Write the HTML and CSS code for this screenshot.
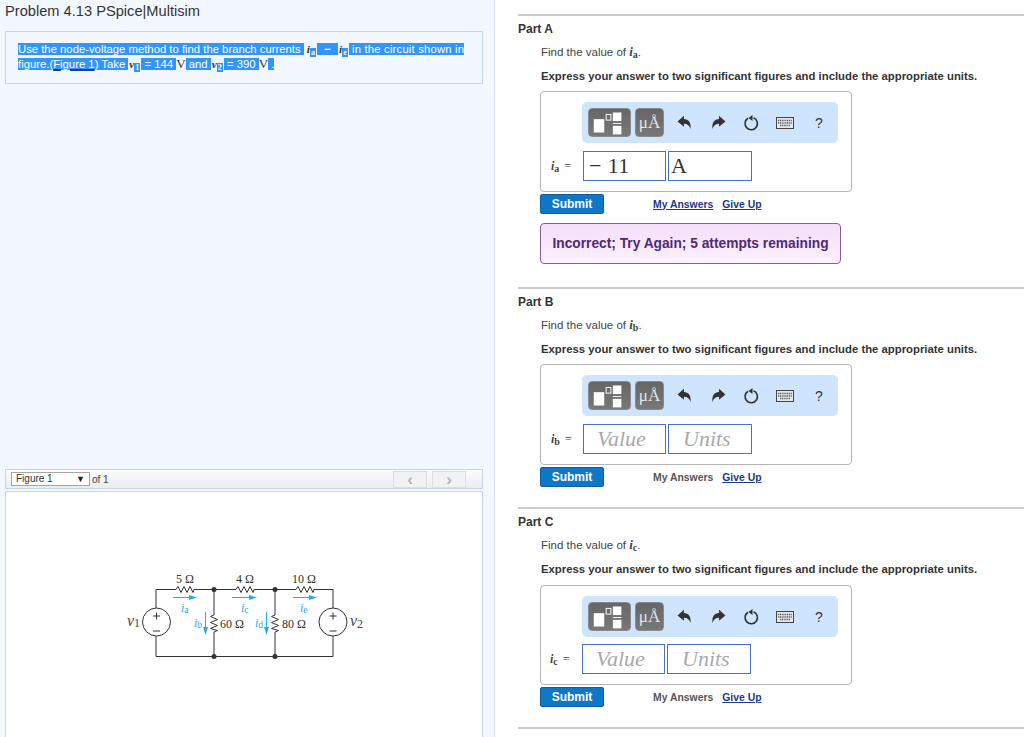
FILE: index.html
```html
<!DOCTYPE html>
<html lang="en">
<head>
<meta charset="utf-8">
<title>Problem 4.13 PSpice|Multisim</title>
<link rel="stylesheet" href="styles.css">
</head>
<body>
<svg class="defs" width="0" height="0" aria-hidden="true">
  <symbol id="tpl" viewBox="0 0 43 29">
    <rect x="5" y="11" width="11" height="14" fill="#fff"/>
    <rect x="18" y="6" width="5" height="6" fill="none" stroke="#fff" stroke-width="1"/>
    <rect x="25" y="4" width="9" height="9" fill="#fff"/>
    <rect x="25" y="15" width="9" height="1" fill="#fff"/>
    <rect x="25" y="18" width="9" height="9" fill="#fff"/>
  </symbol>
  <symbol id="undo" viewBox="0 0 14 14">
    <path d="M0.500 6 L6.500 0.800 V3.800 C10.800 3.800 13.300 7 12.600 13 C11.500 9.500 9.500 8.200 6.500 8.200 V11 Z" fill="#333"/>
  </symbol>
  <symbol id="redo" viewBox="0 0 14 14">
    <path d="M13.500 6 L7.500 0.800 V3.800 C3.200 3.800 0.700 7 1.400 13 C2.500 9.500 4.500 8.200 7.500 8.200 V11 Z" fill="#333"/>
  </symbol>
  <symbol id="reset" viewBox="0 0 16 16">
    <path d="M5 3.300 A6.200 6.200 0 1 0 10.500 2.800" fill="none" stroke="#333" stroke-width="1.600"/>
    <path d="M9.500 0 L9.500 6 L5.500 3 Z" fill="#333"/>
  </symbol>
  <symbol id="kbd" viewBox="0 0 18 12">
    <rect x="0.500" y="0.500" width="17" height="11" fill="#e3e9ef" stroke="#444"/>
    <path d="M2 3.500 H16 M2 6 H16 M4 8.500 H14" stroke="#666" stroke-width="1.400" stroke-dasharray="1.200 .6"/>
  </symbol>
</svg>

<main class="page">
  <section class="left">
    <h1 class="title">Problem 4.13 PSpice|Multisim</h1>
    <div class="intro">
      <p class="intro-text"><span class="sel">Use the node-voltage method to find the branch currents </span><span class="sel-var sel-var-first"><i>i</i><sub>a</sub></span><span class="sel"> &nbsp;</span><span class="sel minus">&minus;</span><span class="sel"> &nbsp;</span><span class="sel-var"><i>i</i><sub>e</sub></span><span class="sel sel-wide"> in the circuit shown in </span><br><span class="sel">figure.(<u>Figure 1</u>) Take </span><span class="sel-var"><i>v</i><sub>1</sub></span><span class="sel"> = 144 </span><span class="sel-unit">V</span><span class="sel"> and </span><span class="sel-var"><i>v</i><sub>2</sub></span><span class="sel"> = 390 </span><span class="sel-unit">V</span><span class="sel"> .</span></p>
    </div>
    <div class="spacer"></div>
    <div class="figure-bar">
      <div class="select"><span>Figure 1</span><span class="caret">&#9660;</span></div>
      <span class="of">of 1</span>
      <div class="pager">
        <span class="page-btn">&lsaquo;</span>
        <span class="page-btn">&rsaquo;</span>
      </div>
    </div>
    <div class="figure">
      <svg class="circuit" width="280" height="110" viewBox="0 0 280 110">
        <g fill="none" stroke="#333" stroke-width="1">
          <path d="M56 48 V29.500 H76 M94 29.500 H136 M154 29.500 H196 M214 29.500 H233 V48"/>
          <path d="M56 76 V96.500 H233 V76"/>
          <path d="M114 29.500 V55 M114 72 V96.500 M175 29.500 V55 M175 72 V96.500"/>
          <path d="M76 29.500 l2 -3 l3 6 l3 -6 l3 6 l3 -6 l3 6 l1 -3"/>
          <path d="M136 29.500 l2 -3 l3 6 l3 -6 l3 6 l3 -6 l3 6 l1 -3"/>
          <path d="M196 29.500 l2 -3 l3 6 l3 -6 l3 6 l3 -6 l3 6 l1 -3"/>
          <path d="M114 55 l-3.500 1.500 l7 3 l-7 3 l7 3 l-7 3 l7 2 l-3.500 1.500"/>
          <path d="M175 55 l-3.500 1.500 l7 3 l-7 3 l7 3 l-7 3 l7 2 l-3.500 1.500"/>
          <circle cx="56.500" cy="62" r="14" fill="#fff"/>
          <circle cx="233" cy="62" r="14" fill="#fff"/>
          <path d="M53 56 H60 M56.500 52.500 V59.500 M53 71 H60 M229.500 56 H236.500 M233 52.500 V59.500 M229.500 71 H236.500"/>
        </g>
        <g fill="#333">
          <circle cx="114" cy="29.500" r="2.500"/>
          <circle cx="175" cy="29.500" r="2.500"/>
          <circle cx="114" cy="96.500" r="2.500"/>
          <circle cx="175" cy="96.500" r="2.500"/>
        </g>
        <g fill="none" stroke="#29abe2" stroke-width="1">
          <path d="M73 37.500 H93 M132 37.500 H153 M193 37.500 H213 M105.500 52 V70 M166.500 52 V70"/>
        </g>
        <g fill="#29abe2">
          <path d="M89 35 L97 37.500 L89 40 Z M149 35 L157 37.500 L149 40 Z M209 35 L217 37.500 L209 40 Z M103 67 L105.500 75 L108 67 Z M164 67 L166.500 75 L169 67 Z"/>
        </g>
        <g class="ct-label">
          <text x="85" y="23" text-anchor="middle">5 Ω</text>
          <text x="145" y="23" text-anchor="middle">4 Ω</text>
          <text x="204" y="23" text-anchor="middle">10 Ω</text>
          <text x="120" y="68">60 Ω</text>
          <text x="182" y="68">80 Ω</text>
        </g>
        <g class="ct-cur">
          <text x="81" y="52"><tspan class="it">i</tspan><tspan class="sm" dy="1">a</tspan></text>
          <text x="141" y="52"><tspan class="it">i</tspan><tspan class="sm" dy="1">c</tspan></text>
          <text x="200" y="52"><tspan class="it">i</tspan><tspan class="sm" dy="1">e</tspan></text>
          <text x="94" y="67"><tspan class="it">i</tspan><tspan class="sm" dy="1">b</tspan></text>
          <text x="155" y="67"><tspan class="it">i</tspan><tspan class="sm" dy="1">d</tspan></text>
        </g>
        <text class="ct-src" x="27" y="66"><tspan class="it">v</tspan><tspan class="sm" dy="1">1</tspan></text>
        <text class="ct-src" x="250" y="66"><tspan class="it">v</tspan><tspan class="sm" dy="2">2</tspan></text>
      </svg>
    </div>
  </section>

  <section class="right">
    <article class="part part-a">
      <h2 class="part-title">Part A</h2>
      <p class="find">Find the value of <span class="var"><i>i</i><sub>a</sub></span>.</p>
      <p class="express">Express your answer to two significant figures and include the appropriate units.</p>
      <div class="answer">
        <div class="toolbar">
          <span class="tool tool-wide"><svg width="43" height="29"><use href="#tpl"/></svg></span>
          <span class="tool tool-unit">μÅ</span>
          <svg class="ico ico-undo" width="15" height="15"><use href="#undo"/></svg>
          <svg class="ico ico-redo" width="15" height="15"><use href="#redo"/></svg>
          <svg class="ico ico-reset" width="16" height="16"><use href="#reset"/></svg>
          <svg class="ico ico-kbd" width="18" height="12"><use href="#kbd"/></svg>
          <span class="help">?</span>
        </div>
        <div class="row">
          <span class="lhs"><i>i</i><sub>a</sub> =</span>
          <span class="field field-filled">&minus; 11</span>
          <span class="field field-filled field-unit">A</span>
        </div>
      </div>
      <div class="actions">
        <span class="submit">Submit</span>
        <a class="link link-first">My Answers</a>
        <a class="link">Give Up</a>
      </div>
      <div class="feedback">Incorrect; Try Again; 5 attempts remaining</div>
    </article>

    <article class="part part-b">
      <h2 class="part-title">Part B</h2>
      <p class="find">Find the value of <span class="var"><i>i</i><sub>b</sub></span>.</p>
      <p class="express">Express your answer to two significant figures and include the appropriate units.</p>
      <div class="answer">
        <div class="toolbar">
          <span class="tool tool-wide"><svg width="43" height="29"><use href="#tpl"/></svg></span>
          <span class="tool tool-unit">μÅ</span>
          <svg class="ico ico-undo" width="15" height="15"><use href="#undo"/></svg>
          <svg class="ico ico-redo" width="15" height="15"><use href="#redo"/></svg>
          <svg class="ico ico-reset" width="16" height="16"><use href="#reset"/></svg>
          <svg class="ico ico-kbd" width="18" height="12"><use href="#kbd"/></svg>
          <span class="help">?</span>
        </div>
        <div class="row">
          <span class="lhs"><i>i</i><sub>b</sub> =</span>
          <span class="field">Value</span>
          <span class="field field-unit">Units</span>
        </div>
      </div>
      <div class="actions">
        <span class="submit">Submit</span>
        <span class="link link-first link-off">My Answers</span>
        <a class="link">Give Up</a>
      </div>
    </article>

    <article class="part part-c">
      <h2 class="part-title">Part C</h2>
      <p class="find">Find the value of <span class="var"><i>i</i><sub>c</sub></span>.</p>
      <p class="express">Express your answer to two significant figures and include the appropriate units.</p>
      <div class="answer">
        <div class="toolbar">
          <span class="tool tool-wide"><svg width="43" height="29"><use href="#tpl"/></svg></span>
          <span class="tool tool-unit">μÅ</span>
          <svg class="ico ico-undo" width="15" height="15"><use href="#undo"/></svg>
          <svg class="ico ico-redo" width="15" height="15"><use href="#redo"/></svg>
          <svg class="ico ico-reset" width="16" height="16"><use href="#reset"/></svg>
          <svg class="ico ico-kbd" width="18" height="12"><use href="#kbd"/></svg>
          <span class="help">?</span>
        </div>
        <div class="row">
          <span class="lhs"><i>i</i><sub>c</sub> =</span>
          <span class="field">Value</span>
          <span class="field field-unit">Units</span>
        </div>
      </div>
      <div class="actions">
        <span class="submit">Submit</span>
        <span class="link link-first link-off">My Answers</span>
        <a class="link">Give Up</a>
      </div>
    </article>
    <div class="end-rule"></div>
  </section>
</main>
</body>
</html>
```

FILE: styles.css
```css
* { box-sizing: border-box; }
html, body { margin: 0; height: 737px; overflow: hidden; background: #fff; }
body { font-family: "Liberation Sans", Arial, sans-serif; color: #333; }
.defs { position: absolute; }
.page { display: flex; height: 737px; }

.left {
  width: 495px;
  flex: none;
  display: flex;
  flex-direction: column;
  background: #f3f8fe;
  border-right: 1px solid #d5deea;
  padding: 0 11px 0 5px;
}
.title { margin: 2px 0 0; font-size: 14.650px; line-height: 18px; font-weight: 400; color: #333; }
.intro {
  margin-top: 11px;
  height: 53px;
  background: #f3f8fe;
  border: 1px solid #c5d6e6;
  padding: 10px 12px 0;
}
.intro-text { margin: 0; font-size: 11.300px; line-height: 14.500px; color: #fff; white-space: nowrap; }
.sel { background: #3295fb; }
.sel-wide { letter-spacing: .18px; }
.sel u { text-decoration-color: #1a3f90; text-decoration-thickness: 2px; }
.minus { font-weight: 700; padding: 0 1px; }
.sel-var { background: #eef3fb; color: #333; font-family: "Liberation Serif", serif; font-weight: 700; padding: 0 1px; }
.sel-var-first { margin-left: 2px; }
.sel-var sub { font-size: 8px; line-height: 0; vertical-align: -2px; background: #3295fb; color: #fff; padding: 0 1px; }
.sel-unit { background: #f3f8fe; color: #333; font-family: "Liberation Serif", serif; font-size: 13px; }
.spacer { flex: 1; }

.figure-bar {
  height: 20px;
  display: flex;
  align-items: center;
  gap: 2px;
  background: linear-gradient(#fbfbfb, #ebedef);
  border: 1px solid #c5d6e6;
  padding: 0 16px 0 5px;
  font-size: 10px;
}
.select {
  width: 79px;
  height: 14px;
  display: flex;
  justify-content: space-between;
  align-items: center;
  background: #fff;
  border: 1px solid #a5a5a5;
  padding: 0 4px;
  font-size: 10px;
  line-height: 12px;
  color: #333;
}
.caret { font-size: 9px; line-height: 9px; color: #222; }
.of { color: #444; }
.pager { margin-left: auto; display: flex; gap: 5px; align-self: flex-end; }
.page-btn {
  width: 34px;
  height: 17px;
  display: flex;
  align-items: center;
  justify-content: center;
  background: #f1f2f3;
  border: 1px solid #dcdfe2;
  color: #b0b5ba;
  font-size: 17px;
  font-weight: 700;
  line-height: 14px;
}
.figure {
  margin-top: 2px;
  height: 246px;
  background: #fff;
  border: 1px solid #c5d6e6;
  border-bottom: 0;
  padding: 68px 0 0 94px;
}
.circuit { display: block; }
.circuit text { font-family: "Liberation Serif", serif; }
.ct-label text { font-size: 12px; fill: #333; }
.ct-cur text { font-size: 12px; fill: #29abe2; }
.ct-src { font-size: 16px; fill: #444; }
.it { font-style: italic; }
.sm { font-size: 9.500px; }
.ct-src .sm { font-size: 12px; }

.right {
  flex: 1;
  padding: 14px 0 0 23px;
  min-width: 0;
}
.part { border-top: 2px solid #ccc; padding-top: 6px; }
.part-a { height: 273px; }
.part-b { height: 220px; }
.part-c { height: 220px; }
.end-rule { border-top: 2px solid #ccc; }
.part-title { margin: 0; font-size: 12px; line-height: 14px; font-weight: 700; color: #333; }
.find, .express { margin: 0 0 0 23px; font-size: 11.500px; line-height: 14px; }
.find { margin-top: 9px; color: #444; }
.var, .lhs { font-family: "Liberation Serif", serif; }
.var { font-size: 13px; }
.var i, .lhs i { font-weight: 700; }
.var sub, .lhs sub { font-size: 10px; line-height: 0; vertical-align: -2px; font-weight: 700; }
.express { margin-top: 10px; font-weight: 700; font-size: 11.330px; color: #333; }
.answer {
  margin: 8px 0 0 22px;
  width: 312px;
  height: 101px;
  border: 1px solid #b5b5b5;
  border-radius: 4px;
  padding: 10px 0 0 41px;
}
.part-c .answer { margin-top: 9px; height: 100px; }
.toolbar {
  width: 256px;
  height: 41px;
  display: flex;
  align-items: center;
  background: #cfe5fd;
  border-radius: 5px;
  padding-left: 6px;
}
.tool {
  height: 29px;
  display: flex;
  align-items: center;
  justify-content: center;
  background: linear-gradient(#666, #787878);
  border: 1px solid #8a8a8a;
  border-radius: 4px;
  color: #fff;
}
.tool-wide { width: 43px; }
.tool-unit {
  width: 29px;
  margin-left: 4px;
  font-family: "Liberation Serif", serif;
  font-size: 17px;
  padding-top: 1px;
  color: #e6e6e6;
}
.ico { display: block; flex: none; }
.ico-undo { margin-left: 13px; }
.ico-redo { margin-left: 19px; }
.ico-reset { margin-left: 17px; }
.ico-kbd { margin-left: 17px; }
.help { margin-left: 21px; font-size: 14px; color: #333; }
.row {
  margin: 8px 0 0 -32px;
  display: flex;
  align-items: center;
  height: 30px;
}
.lhs { width: 33px; padding-left: 1px; font-size: 12px; color: #444; word-spacing: 2px; }
.field {
  width: 83px;
  height: 30px;
  background: #fff;
  border: 1px solid #4472c4;
  padding-left: 13px;
  font-family: "Liberation Serif", serif;
  font-style: italic;
  font-size: 22px;
  line-height: 28px;
  color: #a9a9a9;
}
.field-unit { width: 84px; margin-left: 2px; padding-left: 14px; }
.field-filled { font-style: normal; color: #333; padding-left: 5px; letter-spacing: .4px; }
.field-filled.field-unit { padding-left: 2px; }
.part-c .row { margin: 7px 0 1px -33px; }
.actions {
  margin: 2px 0 0 22px;
  height: 20px;
  display: flex;
  align-items: center;
  font-size: 10.400px;
  font-weight: 700;
}
.submit {
  width: 64px;
  height: 20px;
  display: flex;
  align-items: center;
  justify-content: center;
  background: #0f77c8;
  border: 1px solid #0d5f9e;
  border-radius: 2px;
  color: #fff;
  font-size: 12px;
}
.link { color: #1a3a8c; text-decoration: underline; }
.link-first { margin-left: 49px; margin-right: 9px; }
.link-off { color: #555; text-decoration: none; }
.feedback {
  margin: 9px 0 0 22px;
  width: 301px;
  height: 41px;
  display: flex;
  align-items: center;
  justify-content: center;
  padding-bottom: 1px;
  background: linear-gradient(#f5def9, #fcf1ff);
  border: 1px solid #8c5a9c;
  border-radius: 4px;
  color: #4d2a77;
  font-size: 13.750px;
  font-weight: 700;
}
```
